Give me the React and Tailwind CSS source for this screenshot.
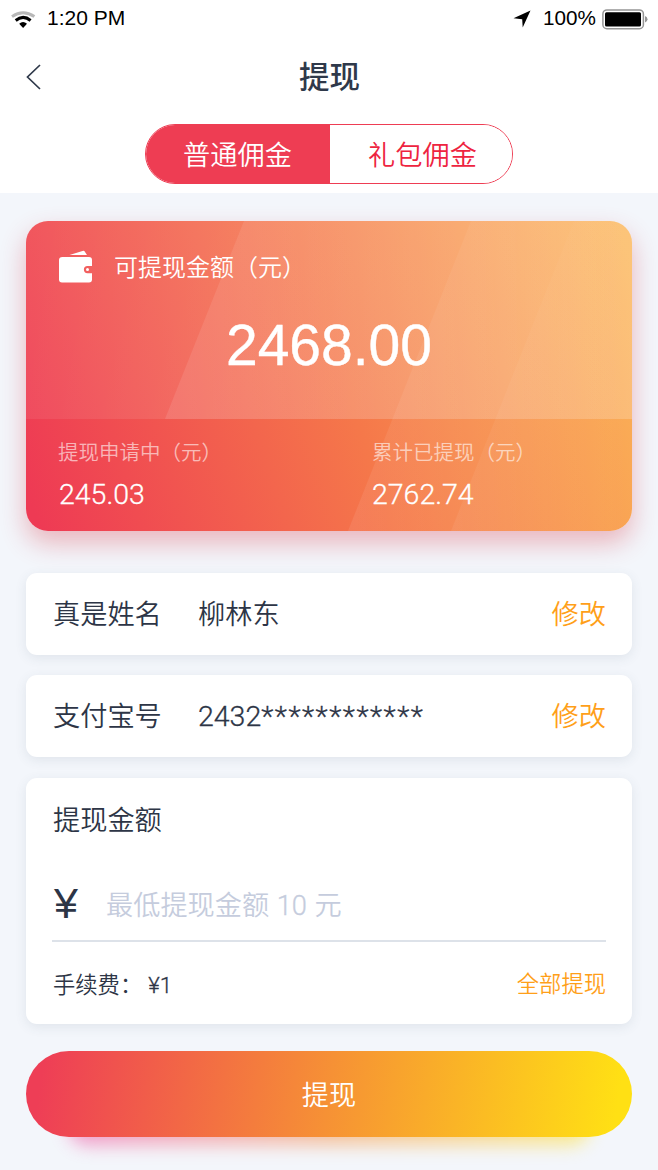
import React, { useState } from 'react';

const tabs = [
  { id: 'normal', label: '普通佣金' },
  { id: 'gift', label: '礼包佣金' },
];

function StatusBar() {
  return (
    <div className="flex h-[38px] items-center justify-between pl-[11px] pr-[9px] text-[21px] leading-none text-black">
      <div className="flex items-center">
        <svg width="25" height="19" viewBox="0 0 25 19" fill="none">
          <path d="M1 6.600Q12 -1.200 23.400 6.600" stroke="#b8b8b8" strokeWidth="3" />
          <path d="M4.700 10.500Q12 4.300 19.600 10.500" stroke="#000" strokeWidth="3" />
          <path d="M8.200 13.800Q12 10.400 16 13.800L12.100 18Z" fill="#000" />
        </svg>
        <span className="ml-[11px] mt-[-3px]">1:20 PM</span>
      </div>
      <div className="flex items-center">
        <svg width="18" height="18" viewBox="0 0 18 18">
          <path d="M17.500 0.500L9.700 17.500L9.200 9.300L0.500 8.300Z" fill="#000" />
        </svg>
        <span className="ml-[12px] mt-[-2px] text-[20.700px]">100%</span>
        <svg className="ml-[6px]" width="47" height="21" viewBox="0 0 47 21">
          <rect x="0.900" y="0.900" width="40.500" height="18.800" rx="4" fill="none" stroke="#959595" strokeWidth="1.500" />
          <rect x="3" y="3.200" width="36" height="14.200" rx="1.500" fill="#000" />
          <path d="M43 7Q45.500 7.800 45.500 10.300T43 13.600Z" fill="#959595" />
        </svg>
      </div>
    </div>
  );
}

function WalletIcon() {
  return (
    <svg width="34" height="34" viewBox="0 0 34 34" fill="#fff">
      <path d="M10.500 5L23.500 1Q25.300 0.500 26 1.900L28 5Z" />
      <path d="M3.500 7H30Q33 7 33 10V16H28.500A3.600 3.600 0 0 0 28.500 23.200H33V29.500Q33 32.500 30 32.500H3Q0 32.500 0 29.500V10Q0 7 3.500 7Z" />
      <circle cx="28.500" cy="19.600" r="1.500" />
    </svg>
  );
}

function BalanceCard() {
  return (
    <section className="relative h-[310px] overflow-hidden rounded-[22px] bg-[linear-gradient(72deg,#ee3a54_2%,#f5784a_52%,#fbb558_98%)] text-white">
      {/* Reflejos diagonales */}
      <svg className="absolute inset-0" width="606" height="310" viewBox="0 0 606 310">
        <defs>
          <linearGradient id="sheen" x1="0" y1="0" x2="1" y2="0">
            <stop offset="0" stopColor="#fff" stopOpacity="0.070" />
            <stop offset="1" stopColor="#fff" stopOpacity="0.200" />
          </linearGradient>
          <linearGradient id="band" x1="0" y1="0" x2="1" y2="0">
            <stop offset="0" stopColor="#fff" stopOpacity="0.100" />
            <stop offset="1" stopColor="#fff" stopOpacity="0" />
          </linearGradient>
        </defs>
        <rect width="606" height="198" fill="url(#sheen)" />
        <path d="M218 0H606V198H139Z" fill="url(#band)" />
        <path d="M445 0H606V310H322Z" fill="url(#band)" opacity="0.800" />
        <path d="M548 0H606V310H425Z" fill="url(#band)" opacity="0.600" />
      </svg>
      <div className="relative h-[198px] px-[33px] pt-[29px]">
        <div className="flex h-[34px] items-center">
          <WalletIcon />
          <span className="ml-[21px] mt-[2px] whitespace-nowrap text-[24px] font-[350] leading-none">可提现金额（元）</span>
        </div>
        <div className="mt-[29px] text-center text-[57px] leading-[64px] [-webkit-text-stroke:0.400px_white]">2468.00</div>
      </div>
      <div className="relative grid grid-cols-[314px_1fr] px-[32px] pt-[22px]">
        <div>
          <div className="text-[20.500px] font-[350] leading-[24px] text-white/60">提现申请中（元）</div>
          <div className="mt-[14px] pl-px font-['Roboto'] text-[28.500px] font-light leading-[32px] [-webkit-text-stroke:0.300px_white]">245.03</div>
        </div>
        <div>
          <div className="text-[20.500px] font-[350] leading-[24px] text-white/60">累计已提现（元）</div>
          <div className="mt-[14px] font-['Roboto'] text-[28.500px] font-light leading-[32px] [-webkit-text-stroke:0.300px_white]">2762.74</div>
        </div>
      </div>
    </section>
  );
}

function InfoRow({ label, children }) {
  return (
    <div className="flex h-[81.500px] items-center rounded-[11px] bg-white pl-[27px] pr-[26px] pt-[3px] text-[27.200px] font-[350] text-[#2d3546] shadow-[0_3px_12px_rgba(60,80,100,0.1)]">
      <span className="w-[145px]">{label}</span>
      <span className="grow">{children}</span>
      <button className="text-[#ff9f19]">修改</button>
    </div>
  );
}

export default function App() {
  const [tab, setTab] = useState('normal');

  return (
    <div className="flex h-[1170px] w-[658px] flex-col overflow-hidden bg-[#f3f6fb] font-['Liberation_Sans','Noto_Sans_CJK_SC',sans-serif]">
      <header className="h-[193px] bg-white">
        <StatusBar />
        <div className="grid h-[78px] grid-cols-3 items-center px-[26px]">
          <button>
            <svg width="16" height="26" viewBox="0 0 16 26" fill="none" stroke="#2f394a" strokeWidth="1.700">
              <path d="M14 1L1.500 13L14 25" />
            </svg>
          </button>
          <h1 className="pl-px pt-px text-center text-[30.500px] font-medium text-[#2f394a]">提现</h1>
        </div>
        <div className="mx-auto mt-[8px] flex h-[60px] w-[368px] overflow-hidden rounded-full border border-[#ee3d53]">
          {tabs.map((t) => (
            <button
              key={t.id}
              onClick={() => setTab(t.id)}
              className={`pt-[5px] text-[27.200px] font-[350] ${
                tab === t.id ? 'w-[184px] bg-[#ee3d53] pr-px text-white' : 'w-[182px] bg-white pl-[3px] text-[#ee2440]'
              }`}
            >
              {t.label}
            </button>
          ))}
        </div>
      </header>

      <main className="flex flex-col px-[26px] pt-[28px]">
        <div className="rounded-[22px] shadow-[0_12px_26px_rgba(215,50,65,0.33)]">
          <BalanceCard />
        </div>

        <div className="relative mt-[42px] flex flex-col gap-[20.800px]">
          <InfoRow label="真是姓名">柳林东</InfoRow>
          <InfoRow label="支付宝号">
            <span className="font-['Roboto'] text-[28.500px] font-light [-webkit-text-stroke:0.300px_#2d3546]">2432</span>
            <span className="font-['Roboto'] text-[28.500px] font-light tracking-[1.500px] [-webkit-text-stroke:0.300px_#2d3546]">************</span>
          </InfoRow>
          <section className="h-[246px] rounded-[11px] bg-white px-[26px] pt-[23px] text-[#2d3546] shadow-[0_3px_12px_rgba(60,80,100,0.1)]">
            <h2 className="pl-px text-[27.200px] font-[350] leading-[40px]">提现金额</h2>
            <div className="mt-[21px] flex h-[80px] items-center border-b-2 border-[#dde2e9] pt-[12px]">
              <span className="w-[54px] pb-[6px] pl-[2px] text-[43px] leading-none">¥</span>
              <span className="text-[27.200px] font-[350] text-[#c5ccdd]">
                最低提现金额 <span className="font-['Roboto'] font-light [-webkit-text-stroke:0.300px_#c5ccdd]">10</span> 元
              </span>
            </div>
            <div className="mt-[26px] flex items-center justify-between text-[22.300px] font-[350] leading-[34px]">
              <span className="pl-px">
                手续费：<span className="ml-[6px] font-['Roboto'] font-light [-webkit-text-stroke:0.300px_#2d3546]">¥1</span>
              </span>
              <button className="text-[#ff9f19]">全部提现</button>
            </div>
          </section>
        </div>

        {/* Botón principal con sombra degradada */}
        <div className="relative mt-[27px] h-[86px]">
          <div className="absolute inset-x-[42px] bottom-[-8px] h-[40px] rounded-full bg-linear-to-r from-[#ee3a9a] via-[#f58a3a] to-[#ffe01a] opacity-50 blur-[9px]" />
          <button className="relative h-full w-full rounded-full bg-[linear-gradient(98deg,#ee3e56_3%,#f69135_50%,#ffe014_97%)] pt-[6px] text-[27.200px] font-[350] text-white">
            提现
          </button>
        </div>
      </main>
    </div>
  );
}
